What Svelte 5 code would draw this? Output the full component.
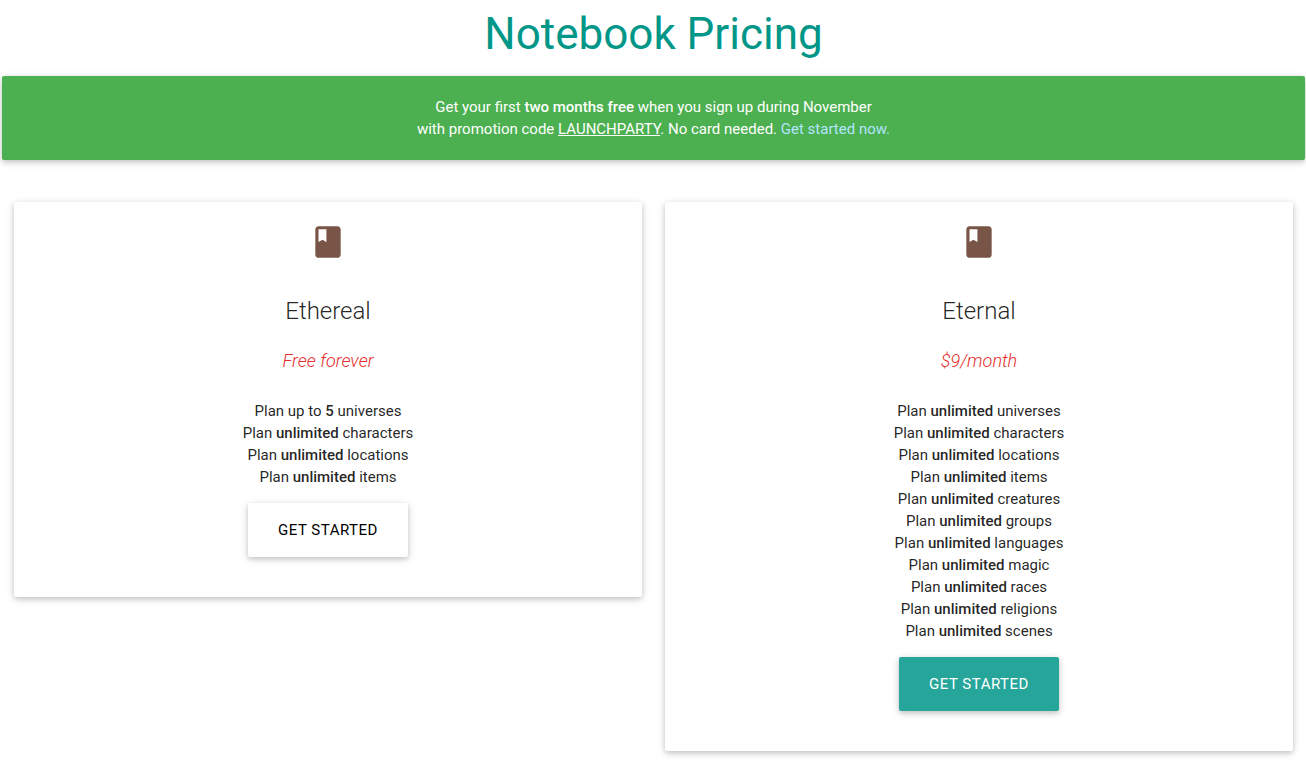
<script>
  const plans = [
    {
      name: 'Ethereal',
      price: 'Free forever',
      primary: false,
      features: [
        ['up to ', '5', 'universes'],
        ['', 'unlimited', 'characters'],
        ['', 'unlimited', 'locations'],
        ['', 'unlimited', 'items']
      ]
    },
    {
      name: 'Eternal',
      price: '$9/month',
      primary: true,
      features: [
        'universes', 'characters', 'locations', 'items', 'creatures', 'groups',
        'languages', 'magic', 'races', 'religions', 'scenes'
      ].map((item) => ['', 'unlimited', item])
    }
  ];
</script>

<main>
  <h1>Notebook Pricing</h1>

  <div class="card-panel promo">
    Get your first <strong>two months free</strong> when you sign up during November<br />
    with promotion code <u>LAUNCHPARTY</u>. No card needed. <a href="#signup">Get started now.</a>
  </div>

  <div class="row">
    {#each plans as plan}
      <section class="card-panel plan">
        <svg class="icon" viewBox="0 0 24 24" xmlns="http://www.w3.org/2000/svg" aria-hidden="true">
          <path d="M18 2H6c-1.1 0-2 .9-2 2v16c0 1.1.9 2 2 2h12c1.1 0 2-.9 2-2V4c0-1.1-.9-2-2-2zM6 4h5v8l-2.500-1.500L6 12V4z" />
        </svg>
        <h2>{plan.name}</h2>
        <p class="price">{plan.price}</p>
        <ul>
          {#each plan.features as [prefix, amount, item]}
            <li>Plan {prefix}<strong>{amount}</strong> {item}</li>
          {/each}
        </ul>
        <button class:primary={plan.primary}>Get started</button>
      </section>
    {/each}
  </div>
</main>

<style>
  :global(body) {
    margin: 0;
    background: #fff;
    color: rgba(0, 0, 0, 0.87);
    font-family: Roboto, sans-serif;
    font-size: 15px;
    line-height: 22px;
  }
  main {
    padding: 10px 1px 12px 2px;
    text-align: center;
  }
  h1 {
    margin: 0 0 18px;
    color: #009688;
    font-size: 44px;
    font-weight: 400;
    line-height: 48px;
  }
  strong { font-weight: 500; }
  .card-panel {
    padding: 20px;
    border-radius: 2px;
    background: #fff;
    box-shadow: 0 2px 5px 0 rgba(0, 0, 0, 0.16), 0 2px 10px 0 rgba(0, 0, 0, 0.12);
  }
  .promo {
    background: #4caf50;
    color: #fff;
  }
  .promo a {
    color: #b3e5fc;
    text-decoration: none;
  }
  .row {
    display: grid;
    grid-template-columns: 1fr 1fr;
    align-items: start;
    gap: 23px;
    margin-top: 42px;
    padding: 0 12px;
  }
  .plan { padding: 21px 20px 40px; }
  .icon {
    display: block;
    width: 38px;
    height: 38px;
    margin: 0 auto;
    fill: #795548;
  }
  h2 {
    margin: 37px 0 24px;
    font-size: 24px;
    font-weight: 300;
    line-height: 26px;
  }
  .price {
    margin: 0 0 26px;
    color: #e52d2d;
    font-size: 18px;
    font-style: italic;
    font-weight: 300;
    line-height: 26px;
  }
  ul {
    margin: 0 0 15px;
    padding: 0;
    list-style: none;
  }
  button {
    height: 54px;
    padding: 0 30px;
    border: 0;
    border-radius: 2px;
    background: #fff;
    color: #000;
    font: inherit;
    letter-spacing: 0.5px;
    text-transform: uppercase;
    cursor: pointer;
    box-shadow: 0 2px 5px 0 rgba(0, 0, 0, 0.16), 0 2px 10px 0 rgba(0, 0, 0, 0.12);
  }
  button.primary {
    background: #26a69a;
    color: #fff;
  }
</style>
